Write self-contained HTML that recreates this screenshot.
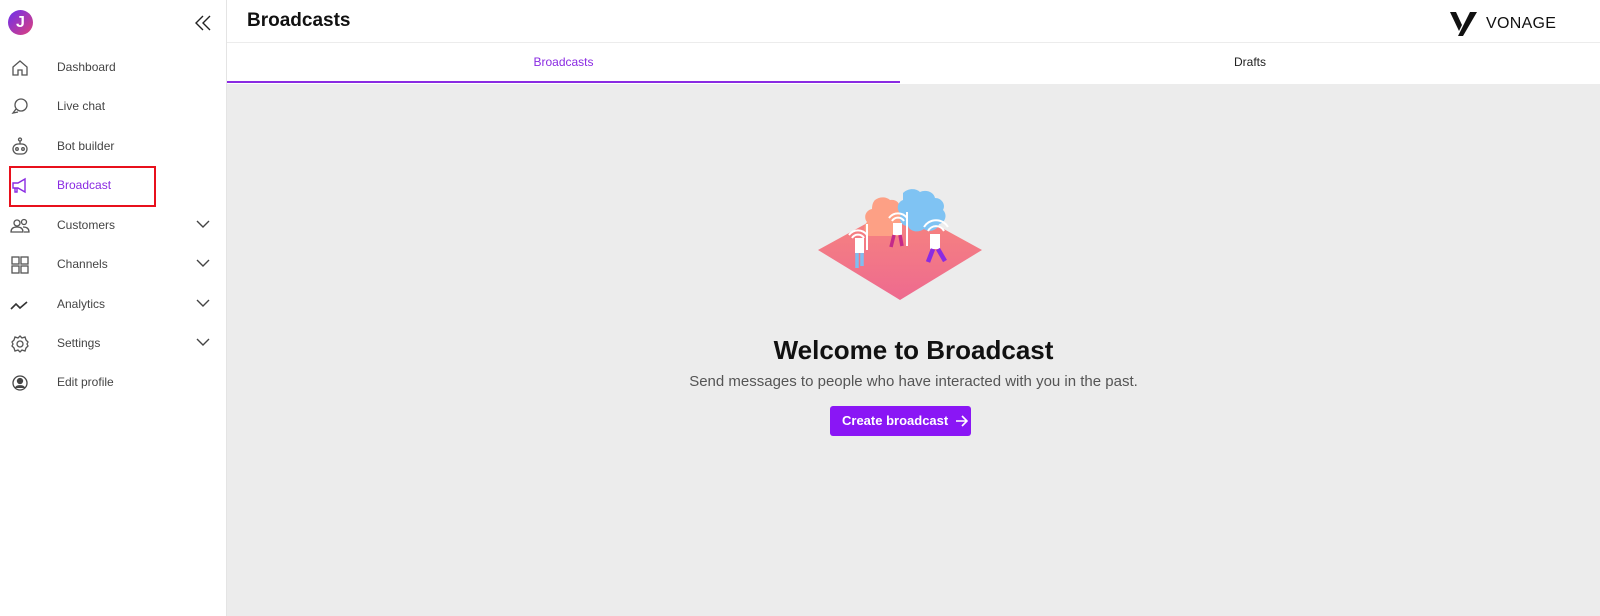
<!DOCTYPE html>
<html><head><style>
*{margin:0;padding:0;box-sizing:border-box}
body{width:1600px;height:616px;overflow:hidden;font-family:"Liberation Sans",Arial,sans-serif;background:#fff;position:relative}
.side{position:absolute;left:0;top:0;width:227px;height:616px;border-right:1px solid #e4e4e4;background:#fff}
.item{position:absolute;left:0;width:226px;height:20px;font-size:12px;color:#444}
.item span{position:absolute;left:57px;top:3px}
.item svg.ic{position:absolute;left:10px;top:1px}
.item svg.ch{position:absolute;left:196px;top:4px}
.main{position:absolute;left:227px;top:0;right:0;height:616px}
.hdr{height:43px;border-bottom:1px solid #ececec;position:relative}
.hdr h1{position:absolute;left:20px;top:10px;font-size:19px;font-weight:bold;color:#111}
.tabs{height:41px;position:relative;font-size:12px}
.content{position:absolute;top:84px;left:0;right:0;bottom:0;background:#ececec}
</style></head><body>
<div class="side">
 <div style="position:absolute;left:8px;top:10px;width:25px;height:25px;border-radius:50%;background:linear-gradient(135deg,#6b2ff0,#e0407a);color:#fff;font-weight:bold;font-size:16px;text-align:center;line-height:25px">J</div>
 <svg style="position:absolute;left:194px;top:14px" width="18" height="18" viewBox="0 0 18 18" fill="none" stroke="#222" stroke-width="1.4"><path d="M9 2L2 9l7 7M16 2L9 9l7 7"/></svg>
 <div class="item" style="top:57px"><svg class="ic" width="20" height="20" viewBox="0 0 20 20" fill="none" stroke="#555" stroke-width="1.3"><path d="M3 9l7-6 7 6v8h-5v-5H8v5H3z"/></svg><span>Dashboard</span></div>
 <div class="item" style="top:96px"><svg class="ic" width="20" height="20" viewBox="0 0 20 20" fill="none" stroke="#555" stroke-width="1.3"><circle cx="11" cy="8" r="6"/><path d="M6 12l-3 4 5-1"/></svg><span>Live chat</span></div>
 <div class="item" style="top:136px"><svg class="ic" width="20" height="20" viewBox="0 0 20 20" fill="none" stroke="#555" stroke-width="1.3"><circle cx="10" cy="2.5" r="1.5"/><path d="M10 4v3"/><rect x="3" y="7" width="14" height="10" rx="5"/><circle cx="7" cy="12" r="1.3"/><circle cx="13" cy="12" r="1.3"/></svg><span>Bot builder</span></div>
 <div style="position:absolute;left:9px;top:166px;width:147px;height:41px;border:2px solid #e8101c"></div>
 <div class="item" style="top:175px;color:#8a2be2"><svg class="ic" width="20" height="20" viewBox="0 0 20 20" fill="none" stroke="#8a2be2" stroke-width="1.4"><path d="M3 7h5l7-4v13l-7-4H3z"/><path d="M5 12v4h2v-4"/></svg><span>Broadcast</span></div>
 <div class="item" style="top:215px"><svg class="ic" width="20" height="20" viewBox="0 0 20 20" fill="none" stroke="#555" stroke-width="1.3"><circle cx="7" cy="7" r="3"/><circle cx="14" cy="6" r="2.5"/><path d="M1 16c0-4 3-5 6-5s6 1 6 5zM13 11c3 0 6 1 6 5h-5"/></svg><span>Customers</span><svg class="ch" width="14" height="10" viewBox="0 0 14 10" fill="none" stroke="#444" stroke-width="1.4"><path d="M1 2l6 6 6-6"/></svg></div>
 <div class="item" style="top:254px"><svg class="ic" width="20" height="20" viewBox="0 0 20 20" fill="none" stroke="#555" stroke-width="1.3"><rect x="2" y="2" width="7" height="7"/><rect x="11" y="2" width="7" height="7"/><rect x="2" y="11" width="7" height="7"/><rect x="11" y="11" width="7" height="7"/></svg><span>Channels</span><svg class="ch" width="14" height="10" viewBox="0 0 14 10" fill="none" stroke="#444" stroke-width="1.4"><path d="M1 2l6 6 6-6"/></svg></div>
 <div class="item" style="top:294px"><svg class="ic" width="20" height="20" viewBox="0 0 20 20" fill="none" stroke="#333" stroke-width="1.6"><path d="M1 14l5-5 4 4 7-6"/></svg><span>Analytics</span><svg class="ch" width="14" height="10" viewBox="0 0 14 10" fill="none" stroke="#444" stroke-width="1.4"><path d="M1 2l6 6 6-6"/></svg></div>
 <div class="item" style="top:333px"><svg class="ic" width="20" height="20" viewBox="0 0 20 20" fill="none" stroke="#555" stroke-width="1.3"><circle cx="10" cy="10" r="3"/><path d="M10 2l2 2 3-1 1 3 2 2-1 2 1 2-2 2-1 3-3-1-2 2-2-2-3 1-1-3-2-2 1-2-1-2 2-2 1-3 3 1z"/></svg><span>Settings</span><svg class="ch" width="14" height="10" viewBox="0 0 14 10" fill="none" stroke="#444" stroke-width="1.4"><path d="M1 2l6 6 6-6"/></svg></div>
 <div class="item" style="top:372px"><svg class="ic" width="20" height="20" viewBox="0 0 20 20" fill="none" stroke="#444" stroke-width="1.3"><circle cx="10" cy="10" r="7"/><circle cx="10" cy="8" r="2.5" fill="#444"/><path d="M5.5 15c1-3 8-3 9 0" fill="#444"/></svg><span>Edit profile</span></div>
</div>
<div class="main">
 <div class="hdr"><h1>Broadcasts</h1>
  <svg style="position:absolute;left:1222px;top:11px" width="30" height="26" viewBox="0 0 30 26"><path d="M1 1h6l6 13-3 6z" fill="#111"/><path d="M21 1h7L14 25H9z" fill="#111"/></svg>
  <div style="position:absolute;left:1259px;top:15px;font-size:16px;color:#111;letter-spacing:0.3px">VONAGE</div>
 </div>
 <div class="tabs">
  <div style="position:absolute;left:0;width:673px;top:0;height:40px;border-bottom:2px solid #8a2be2;text-align:center;line-height:38px;color:#8a2be2">Broadcasts</div>
  <div style="position:absolute;left:673px;right:0;top:0;height:40px;text-align:center;line-height:38px;color:#222">Drafts</div>
 </div>
 <div class="content">
  <svg style="position:absolute;left:590px;top:104px" width="170" height="115" viewBox="0 0 170 115">
   <defs><linearGradient id="g" x1="0" y1="0" x2="0" y2="1"><stop offset="0" stop-color="#f7877d"/><stop offset="1" stop-color="#ee6a8f"/></linearGradient></defs>
   <path d="M1 62L83 17l82 45-82 50z" fill="url(#g)"/>
   <path d="M58 12c5-4 12-3 15 0 6-1 10 3 10 8 5 2 6 9 2 13v15H52c-5-3-6-10-2-14-4-5-1-12 5-13 0-4 1-7 3-9z" fill="#fda085"/>
   <path d="M86 5c5-5 13-5 17-1 6-3 14 0 15 6 7 0 11 7 8 12 5 5 2 13-4 14-1 6-10 9-15 5-5 4-14 3-16-3-7 0-10-7-7-12-5-4-4-12 2-14 0-3 0-5 0-7z" fill="#7fc3f3"/>
   <path d="M50 36v26M90 24v34" stroke="#fff" stroke-width="2"/>
   <rect x="76" y="35" width="9" height="12" fill="#fff"/><path d="M77 47l-3 12M83 47l2 11" stroke="#c42a8a" stroke-width="3.5"/>
   <rect x="38" y="50" width="9" height="15" fill="#fff"/><path d="M40 65v15M45 65v13" stroke="#7fbdf0" stroke-width="3.5"/>
   <rect x="113" y="46" width="10" height="15" fill="#fff"/><path d="M116 61l-5 13M121 61l7 12" stroke="#8a2be2" stroke-width="4.5"/>
   <path d="M32 47a11 11 0 0 1 18 0M35 50a7 7 0 0 1 12 0M72 30a11 11 0 0 1 18 0M75 33a7 7 0 0 1 12 0M107 39a14 14 0 0 1 24 0M111 43a9 9 0 0 1 16 0" stroke="#fff" stroke-width="2" fill="none"/>
  </svg>
  <div style="position:absolute;left:0;right:0;top:251px;text-align:center;font-size:26px;font-weight:bold;color:#111">Welcome to Broadcast</div>
  <div style="position:absolute;left:0;right:0;top:289px;text-align:center;font-size:15px;color:#555">Send messages to people who have interacted with you in the past.</div>
  <div style="position:absolute;left:603px;top:322px;width:141px;height:30px;background:#8a16f5;border-radius:3px;color:#fff;font-size:13px;font-weight:bold;line-height:30px;padding-left:12px">Create broadcast <svg style="vertical-align:-2px;margin-left:3px" width="13" height="12" viewBox="0 0 13 12" fill="none" stroke="#fff" stroke-width="1.6"><path d="M1 6h11M7 1l5 5-5 5"/></svg></div>
 </div>
</div>
</body></html>
